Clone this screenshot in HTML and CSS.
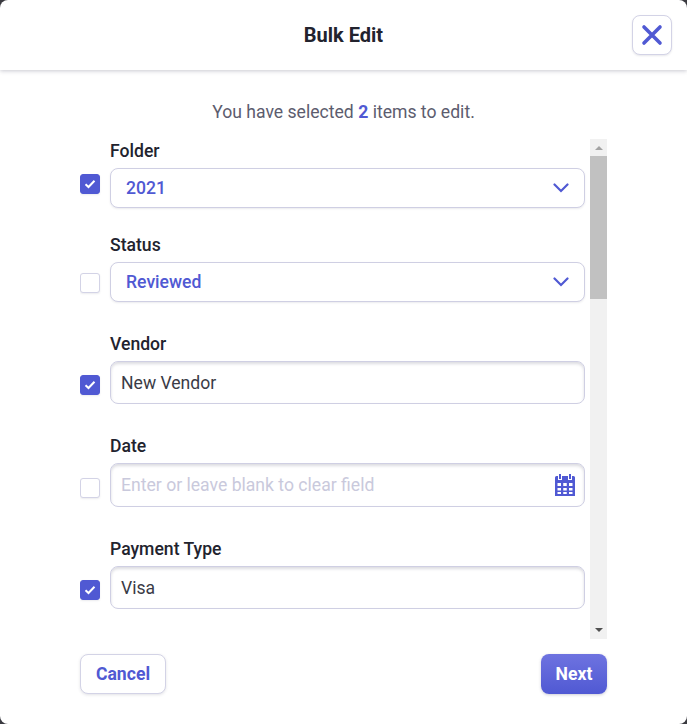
FILE: index.html
```html
<!DOCTYPE html>
<html lang="en">
<head>
<meta charset="utf-8">
<title>Bulk Edit</title>
<link rel="stylesheet" href="styles.css">
</head>
<body>
<div class="modal">
  <header class="modal-header">
    <h1 class="modal-title">Bulk Edit</h1>
    <button class="close-btn" aria-label="Close">
      <svg width="22" height="22" viewBox="0 0 22 22"><path d="M3 3 19 19M19 3 3 19" stroke="#5059d3" stroke-width="3.600" stroke-linecap="round" fill="none"/></svg>
    </button>
  </header>
  <p class="intro">You have selected <strong>2</strong> items to edit.</p>
  <div class="scroll-area">
    <div class="fields">
      <div class="field field-first">
        <span class="check on check-high"><svg width="12" height="10" viewBox="0 0 12 10"><path d="M1.500 5.200 4.500 8 10.500 1.800" stroke="#fff" stroke-width="2" fill="none"/></svg></span>
        <div class="field-body">
          <label class="field-label">Folder</label>
          <div class="select"><span>2021</span><svg width="16" height="10" viewBox="0 0 16 10"><path d="M1.500 1.500 8 8 14.500 1.500" stroke="#5059d3" stroke-width="2.200" stroke-linecap="round" fill="none"/></svg></div>
        </div>
      </div>
      <div class="field field-second">
        <span class="check"></span>
        <div class="field-body">
          <label class="field-label">Status</label>
          <div class="select"><span>Reviewed</span><svg width="16" height="10" viewBox="0 0 16 10"><path d="M1.500 1.500 8 8 14.500 1.500" stroke="#5059d3" stroke-width="2.200" stroke-linecap="round" fill="none"/></svg></div>
        </div>
      </div>
      <div class="field">
        <span class="check on"><svg width="12" height="10" viewBox="0 0 12 10"><path d="M1.500 5.200 4.500 8 10.500 1.800" stroke="#fff" stroke-width="2" fill="none"/></svg></span>
        <div class="field-body">
          <label class="field-label">Vendor</label>
          <div class="input">New Vendor</div>
        </div>
      </div>
      <div class="field">
        <span class="check"></span>
        <div class="field-body">
          <label class="field-label">Date</label>
          <div class="input input-date"><span class="placeholder">Enter or leave blank to clear field</span>
            <svg width="20" height="22" viewBox="0 0 20 22"><path fill="#5059d3" fill-rule="evenodd" d="M4 0h2v5H4zM14 0h2v5h-2zM1.500 2H3v4h4V2h6v4h4V2h1.500A1.500 1.500 0 0 1 20 3.500V22H0V3.500A1.500 1.500 0 0 1 1.500 2zM2.500 9v3H6V9zM8.250 9v3h3.500V9zM14 9v3h3.500V9zM2.500 14v2.500H6V14zM8.250 14v2.500h3.500V14zM14 14v2.500h3.500V14zM2.500 18v2H6v-2zM8.250 18v2h3.500v-2zM14 18v2h3.500v-2z"/></svg>
          </div>
        </div>
      </div>
      <div class="field">
        <span class="check on"><svg width="12" height="10" viewBox="0 0 12 10"><path d="M1.500 5.200 4.500 8 10.500 1.800" stroke="#fff" stroke-width="2" fill="none"/></svg></span>
        <div class="field-body">
          <label class="field-label">Payment Type</label>
          <div class="input">Visa</div>
        </div>
      </div>
    </div>
    <div class="scrollbar">
      <span class="arrow arrow-up"></span>
      <span class="thumb"></span>
      <span class="arrow arrow-down"></span>
    </div>
  </div>
  <footer class="modal-footer">
    <button class="btn btn-cancel">Cancel</button>
    <button class="btn btn-next">Next</button>
  </footer>
</div>
</body>
</html>
```
FILE: styles.css
```css
* { box-sizing: border-box; }
html, body { margin: 0; height: 100%; }
body { background: #3a3a40; font-family: Roboto, "Liberation Sans", sans-serif; color: #22232e; overflow: hidden; }
.modal { width: 687px; height: 724px; background: #fff; display: flex; flex-direction: column; border-radius: 8px; overflow: hidden; }
.modal-header { height: 70px; flex: none; display: flex; align-items: center; justify-content: center; position: relative; box-shadow: 0 1px 4px rgba(60, 60, 90, .28); }
.modal-title { margin: 0; font-size: 20px; font-weight: 700; line-height: 24px; color: #22232e; }
.close-btn { position: absolute; left: 632px; top: 15px; width: 40px; height: 40px; padding: 0; background: #fff; border: 1px solid #d3d3e6; border-radius: 8px; display: flex; align-items: center; justify-content: center; box-shadow: 0 1px 2px rgba(60, 60, 90, .12); }
.intro { margin: 30px 0 0; height: 24px; text-align: center; font-size: 17.6px; line-height: 24px; color: #5c5c6e; }
.intro strong { color: #5059d3; font-weight: 700; }
.scroll-area { margin: 15px 0 0 80px; width: 527px; height: 500px; display: flex; overflow: hidden; flex: none; }
.fields { width: 505px; flex: none; padding-top: 2px; }
.scrollbar { width: 17px; margin-left: 5px; background: #f1f1f1; display: flex; flex-direction: column; align-items: center; flex: none; }
.arrow { width: 0; height: 0; border-left: 4px solid transparent; border-right: 4px solid transparent; flex: none; }
.arrow-up { border-bottom: 4px solid #a3a3a3; margin: 7px 0 6px; }
.thumb { width: 100%; height: 143px; background: #c1c1c1; flex: none; }
.arrow-down { border-top: 4px solid #505050; margin-top: auto; margin-bottom: 7px; }
.field { display: flex; align-items: flex-end; margin-top: 32px; }
.field-first { margin-top: 0; }
.field-second { margin-top: 27px; }
.field-body { width: 475px; margin-left: 10px; flex: none; }
.field-label { display: block; font-size: 17.6px; font-weight: 500; line-height: 20px; margin-bottom: 7px; color: #22232e; }
.check { width: 20px; height: 20px; flex: none; border-radius: 3px; background: #fff; border: 1px solid #d3d3e6; box-shadow: 0 1px 2px rgba(60, 60, 90, .1); margin-bottom: 9px; display: flex; align-items: center; justify-content: center; }
.check.on { background: #5059d3; border-color: #5059d3; }
.check-high { margin-bottom: 14px; }
.select { height: 40px; border: 1px solid #cfcfe3; border-radius: 8px; background: #fff; display: flex; align-items: center; justify-content: space-between; padding: 0 15px 0 15px; font-size: 17.6px; font-weight: 500; color: #5059d3; box-shadow: 0 1px 2px rgba(60, 60, 90, .1); }
.input { height: 43px; border: 1px solid #cfcfe3; border-radius: 8px; background: #fff; display: flex; align-items: center; justify-content: space-between; padding: 0 9px 0 10px; font-size: 17.6px; color: #3a3b46; box-shadow: inset 0 2px 3px rgba(60, 60, 90, .18); }
.input-date { height: 44px; }
.placeholder { color: #c9c9dc; }
.modal-footer { margin: 15px 80px 0; display: flex; justify-content: space-between; align-items: flex-start; }
.btn { height: 40px; font: 700 17.6px Roboto, "Liberation Sans", sans-serif; border-radius: 8px; padding: 0; }
.btn-cancel { width: 86px; background: #fff; color: #5059d3; border: 1px solid #d3d3e6; box-shadow: 0 1px 3px rgba(60, 60, 90, .15); }
.btn-next { width: 66px; color: #fff; border: 0; background: linear-gradient(#6e73e0, #5059d3); box-shadow: 0 1px 3px rgba(60, 60, 90, .25); }
```
